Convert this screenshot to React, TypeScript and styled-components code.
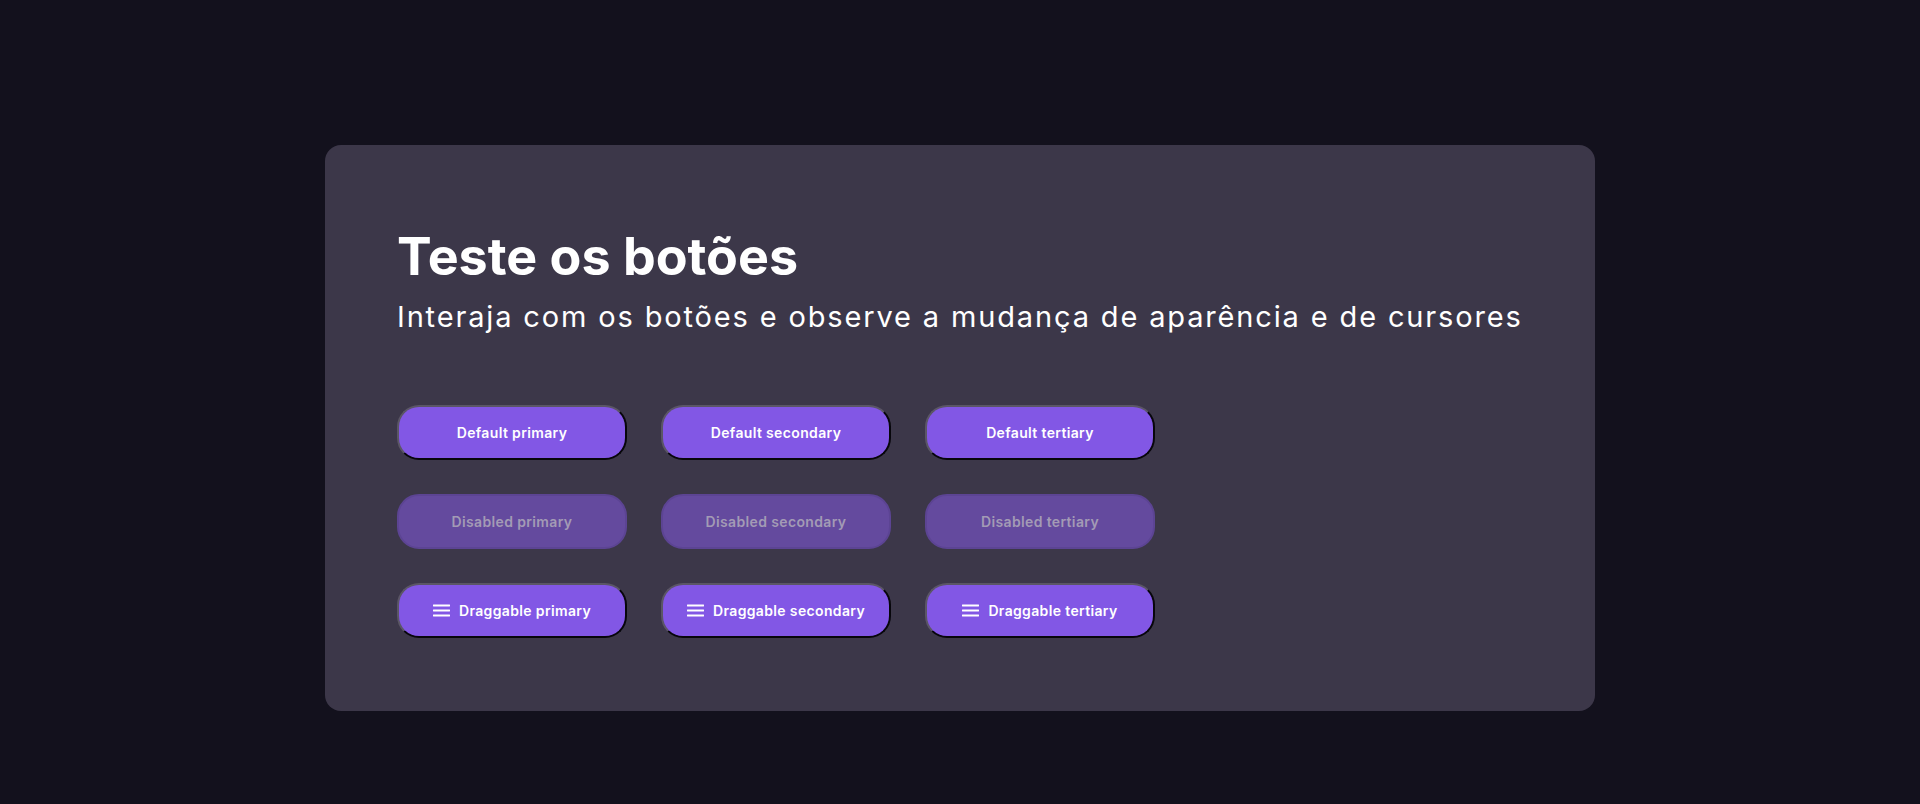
import styled, { createGlobalStyle } from "styled-components";

const GlobalStyle = createGlobalStyle`
  * {
    box-sizing: border-box;
  }
  body {
    margin: 0;
    background-color: #13111d;
    font-family: Inter, "Noto Sans", sans-serif;
    color: #ffffff;
  }
`;

type Variant = "primary" | "secondary" | "tertiary";

const variants: Variant[] = ["primary", "secondary", "tertiary"];

const DragIcon = () => (
  <svg width="17" height="13" viewBox="0 0 17 13" fill="none">
    <path
      d="M0.5 1.5h16M0.5 6.5h16M0.5 11.5h16"
      stroke="#ffffff"
      strokeWidth="1.8"
      strokeLinecap="round"
    />
  </svg>
);

export default function App() {
  return (
    <>
      <GlobalStyle />
      <Page>
        <Card>
          <Title>Teste os botões</Title>
          <Subtitle>
            Interaja com os botões e observe a mudança de aparência e de
            cursores
          </Subtitle>
          <ButtonGrid>
            {variants.map((v) => (
              <Button key={`default-${v}`}>Default {v}</Button>
            ))}
            {variants.map((v) => (
              <Button key={`disabled-${v}`} disabled>
                Disabled {v}
              </Button>
            ))}
            {variants.map((v) => (
              <Button key={`drag-${v}`} $draggable>
                <DragIcon />
                Draggable {v}
              </Button>
            ))}
          </ButtonGrid>
        </Card>
      </Page>
    </>
  );
}

const Page = styled.main`
  min-height: 804px;
  padding-top: 145px;
`;

const Card = styled.section`
  width: 1270px;
  margin: 0 auto;
  padding: 81px 72px 73px;
  background-color: #3c3749;
  border-radius: 16px;
`;

const Title = styled.h1`
  margin: 0;
  font-size: 52px;
  font-weight: 700;
  line-height: 62px;
`;

const Subtitle = styled.p`
  margin: 9px 0 0;
  font-size: 29px;
  font-weight: 400;
  line-height: 40px;
  letter-spacing: 1.85px;
  white-space: nowrap;
`;

const ButtonGrid = styled.div`
  display: grid;
  grid-template-columns: repeat(3, 230px);
  column-gap: 34px;
  row-gap: 34px;
  margin-top: 68px;
`;

const Button = styled.button<{ $draggable?: boolean }>`
  display: flex;
  align-items: center;
  justify-content: center;
  gap: 9px;
  height: 55px;
  padding: 0 16px;
  border: 2px solid #5b5666;
  border-right-color: #07060b;
  border-bottom-color: #07060b;
  border-radius: 22px;
  background-color: #8257e5;
  color: #ffffff;
  font-family: Inter, "Noto Sans", sans-serif;
  font-size: 14px;
  font-weight: 600;
  letter-spacing: 0.35px;
  cursor: ${({ $draggable }) => ($draggable ? "grab" : "pointer")};

  &:disabled {
    background-color: #644a9e;
    border-color: #5c4493;
    color: #a39bb5;
    cursor: not-allowed;
  }
`;
